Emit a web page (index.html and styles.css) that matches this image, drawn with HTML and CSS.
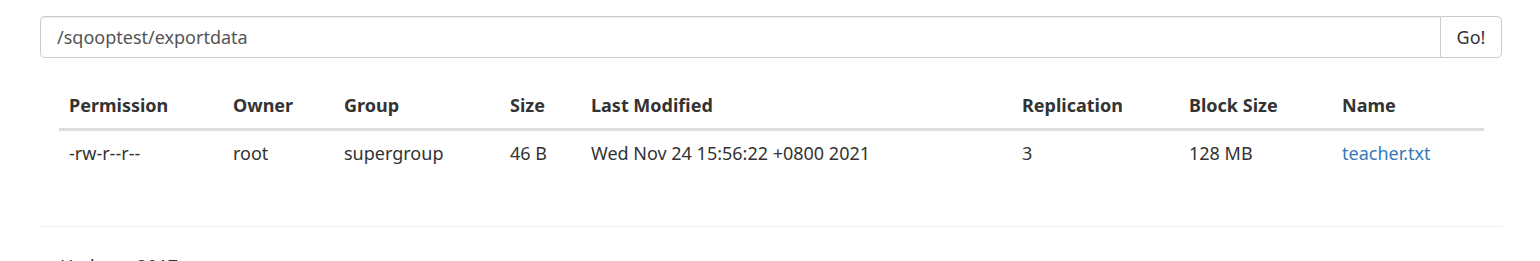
FILE: index.html
```html
<!DOCTYPE html>
<html>
<head>
<meta charset="utf-8">
<link rel="stylesheet" href="styles.css">
</head>
<body>
<div class="container">
  <div class="input-group">
    <input class="path-input" type="text" value="/sqooptest/exportdata">
    <button class="go-btn" type="button">Go!</button>
  </div>
  <div class="table-wrap">
    <table class="table">
      <colgroup>
        <col class="c-perm"><col class="c-owner"><col class="c-group"><col class="c-size">
        <col class="c-mod"><col class="c-rep"><col class="c-block"><col class="c-name">
      </colgroup>
      <thead>
        <tr>
          <th>Permission</th><th>Owner</th><th>Group</th><th>Size</th>
          <th>Last Modified</th><th>Replication</th><th>Block Size</th><th>Name</th>
        </tr>
      </thead>
      <tbody>
        <tr>
          <td>-rw-r--r--</td><td>root</td><td>supergroup</td><td>46 B</td>
          <td>Wed Nov 24 15:56:22 +0800 2021</td><td>3</td><td>128 MB</td>
          <td><a class="file-link" href="#">teacher.txt</a></td>
        </tr>
      </tbody>
    </table>
  </div>
  <hr class="divider">
  <div class="footer">Hadoop, 2017.</div>
</div>
</body>
</html>
```
FILE: styles.css
```css
html, body {
  margin: 0;
  padding: 0;
  background: #fff;
}
body {
  font-family: "Noto Sans", "Open Sans", sans-serif;
  font-size: 18px;
  line-height: 24px;
  color: #333;
  overflow: hidden;
}
.container {
  padding: 16px 38px 0 40px;
}
.input-group {
  display: flex;
  height: 42px;
}
.path-input {
  flex: 1;
  box-sizing: border-box;
  height: 42px;
  margin: 0;
  padding: 0 14px 0 16px;
  border: 1px solid #ccc;
  border-right: 0;
  border-radius: 5px 0 0 5px;
  font-family: inherit;
  font-size: 18px;
  color: #555;
  background: #fff;
  box-shadow: inset 0 1px 1px rgba(0,0,0,.075);
  outline: none;
}
.go-btn {
  box-sizing: border-box;
  width: 62px;
  height: 42px;
  margin: 0;
  padding: 0;
  border: 1px solid #ccc;
  border-radius: 0 5px 5px 0;
  background: #fff;
  color: #333;
  font-family: inherit;
  font-size: 18px;
}
.table-wrap {
  padding: 26px 18px 0 19px;
}
.table {
  width: 100%;
  border-collapse: collapse;
  table-layout: fixed;
  margin-bottom: 52px;
}
.c-perm { width: 164px; }
.c-owner { width: 111px; }
.c-group { width: 166px; }
.c-size { width: 81px; }
.c-mod { width: 431px; }
.c-rep { width: 167px; }
.c-block { width: 153px; }
.c-name { width: 152px; }
.table th, .table td {
  padding: 9.6px 10px;
  text-align: left;
  white-space: nowrap;
}
.table th {
  font-weight: 700;
  vertical-align: bottom;
  padding-top: 9px;
  padding-bottom: 11px;
  border-bottom: 3px solid #ddd;
}
.table td {
  vertical-align: top;
}
.file-link {
  color: #337ab7;
  text-decoration: none;
}
.divider {
  margin: 28px 0 0 0;
  border: 0;
  border-top: 1px solid #eee;
  height: 0;
}
.footer {
  padding: 27px 0 0 20px;
}
```
